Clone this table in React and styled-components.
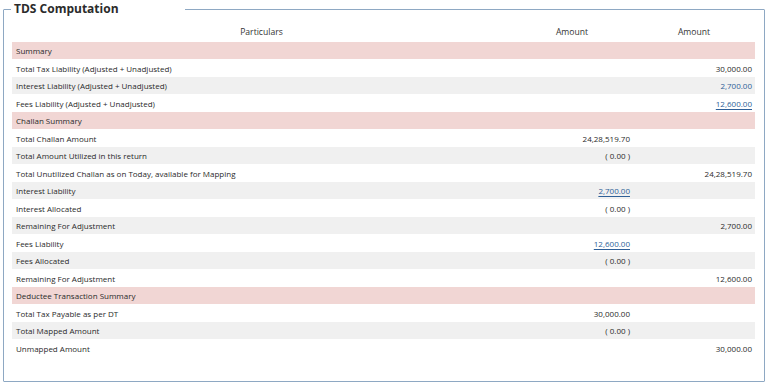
import React from "react";
import styled, { createGlobalStyle } from "styled-components";

const GlobalStyle = createGlobalStyle`
  html, body {
    margin: 0;
    padding: 0;
    background: #ffffff;
  }
  body {
    font-family: "Open Sans", "Liberation Sans", sans-serif;
    color: #2a2a2a;
  }
`;

const rows = [
  { type: "section", label: "Summary" },
  { label: "Total Tax Liability (Adjusted + Unadjusted)", a2: "30,000.00" },
  { label: "Interest Liability (Adjusted + Unadjusted)", a2: "2,700.00", link2: "plain" },
  { label: "Fees Liability (Adjusted + Unadjusted)", a2: "12,600.00", link2: "under" },
  { type: "section", label: "Challan Summary" },
  { label: "Total Challan Amount", a1: "24,28,519.70" },
  { label: "Total Amount Utilized in this return", a1: "( 0.00 )" },
  { label: "Total Unutilized Challan as on Today, available for Mapping", a2: "24,28,519.70" },
  { label: "Interest Liability", a1: "2,700.00", link1: "under" },
  { label: "Interest Allocated", a1: "( 0.00 )" },
  { label: "Remaining For Adjustment", a2: "2,700.00" },
  { label: "Fees Liability", a1: "12,600.00", link1: "under" },
  { label: "Fees Allocated", a1: "( 0.00 )" },
  { label: "Remaining For Adjustment", a2: "12,600.00" },
  { type: "section", label: "Deductee Transaction Summary" },
  { label: "Total Tax Payable as per DT", a1: "30,000.00" },
  { label: "Total Mapped Amount", a1: "( 0.00 )" },
  { label: "Unmapped Amount", a2: "30,000.00" },
];

const Frame = styled.fieldset`
  margin: 0 3px;
  padding: 0 8px 24px 8px;
  border: 1px solid #8ea8c3;
  border-radius: 1px;
  height: 382px;
  box-sizing: border-box;
`;

const Title = styled.legend`
  padding: 0 66px 0 3px;
  margin-left: -1px;
  font-size: 12px;
  line-height: 18px;
  font-weight: 700;
  color: #2b2b2b;
`;

const Table = styled.div`
  display: grid;
  grid-template-columns: 499px 122px 122px;
  margin-top: 6px;
`;

const HeadCell = styled.div`
  height: 17px;
  line-height: 17px;
  font-size: 8.6px;
  text-align: center;
  color: #333;
`;

const Row = styled.div`
  display: contents;
`;

const Cell = styled.div`
  height: 17.5px;
  line-height: 17.5px;
  font-size: 8px;
  font-weight: 500;
  padding: 0 3px 0 4px;
  border-top: 1px solid #ffffff;
  box-sizing: border-box;
  white-space: nowrap;
  text-align: ${(p) => (p.$num ? "right" : "left")};
  background: ${(p) =>
    p.$kind === "section" ? "#f1d6d4" : p.$kind === "alt" ? "#f0f0f0" : "#ffffff"};
`;

const Link = styled.span`
  color: #2e5f97;
  text-decoration: ${(p) => (p.$under ? "underline" : "none")};
  text-underline-offset: 2px;
`;

const Value = ({ v, link }) => {
  if (!v) return null;
  if (link) return <Link $under={link === "under"}>{v}</Link>;
  return v;
};

export default function App() {
  let n = 0;
  return (
    <>
      <GlobalStyle />
      <Frame>
        <Title>TDS Computation</Title>
        <Table>
          <HeadCell>Particulars</HeadCell>
          <HeadCell>Amount</HeadCell>
          <HeadCell>Amount</HeadCell>
          {rows.map((r, i) => {
            let kind;
            if (r.type === "section") {
              kind = "section";
              n = 0;
            } else {
              kind = n % 2 === 1 ? "alt" : "plain";
              n += 1;
            }
            return (
              <Row key={i}>
                <Cell $kind={kind}>{r.label}</Cell>
                <Cell $kind={kind} $num>
                  <Value v={r.a1} link={r.link1} />
                </Cell>
                <Cell $kind={kind} $num>
                  <Value v={r.a2} link={r.link2} />
                </Cell>
              </Row>
            );
          })}
        </Table>
      </Frame>
    </>
  );
}
